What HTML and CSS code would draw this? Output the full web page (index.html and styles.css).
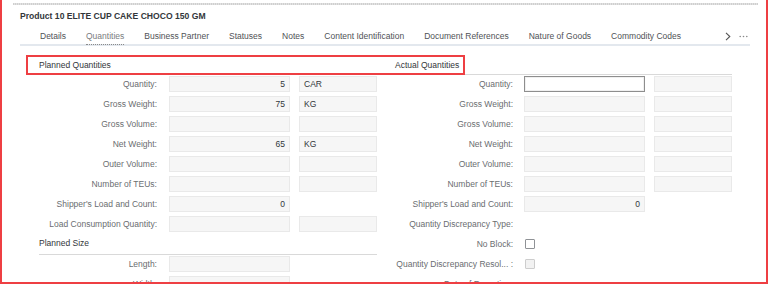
FILE: index.html
```html
<!DOCTYPE html>
<html>
<head>
<meta charset="utf-8">
<link rel="stylesheet" href="styles.css">
</head>
<body>
<div class="frame">
  <div class="topline"></div>
  <div class="title">Product 10 ELITE CUP CAKE CHOCO 150 GM</div>
  <div class="tabs">
    <span class="tab">Details</span>
    <span class="tab selected">Quantities</span>
    <span class="tab">Business Partner</span>
    <span class="tab">Statuses</span>
    <span class="tab">Notes</span>
    <span class="tab">Content Identification</span>
    <span class="tab">Document References</span>
    <span class="tab">Nature of Goods</span>
    <span class="tab">Commodity Codes</span>
    <span class="tab-more">
      <svg class="chev" width="6" height="9" viewBox="0 0 6 9"><path d="M1 0.8 L4.8 4.5 L1 8.2" fill="none" stroke="#555" stroke-width="1.1"/></svg>
      <svg class="dots" width="9" height="3" viewBox="0 0 9 3"><circle cx="1.2" cy="1.5" r="0.8" fill="#888"/><circle cx="4.5" cy="1.5" r="0.8" fill="#888"/><circle cx="7.8" cy="1.5" r="0.8" fill="#888"/></svg>
    </span>
  </div>

  <div class="form">
    <div class="col col-left">
      <div class="heading">Planned Quantities</div>
      <div class="grid">
        <div class="label">Quantity:</div><div class="field num">5</div><div class="field">CAR</div>
        <div class="label">Gross Weight:</div><div class="field num">75</div><div class="field">KG</div>
        <div class="label">Gross Volume:</div><div class="field num"></div><div class="field"></div>
        <div class="label">Net Weight:</div><div class="field num">65</div><div class="field">KG</div>
        <div class="label">Outer Volume:</div><div class="field num"></div><div class="field"></div>
        <div class="label">Number of TEUs:</div><div class="field num"></div><div class="field"></div>
        <div class="label">Shipper's Load and Count:</div><div class="field num">0</div><div class="empty"></div>
        <div class="label">Load Consumption Quantity:</div><div class="field num"></div><div class="field"></div>
      </div>
      <div class="heading heading-sub">Planned Size</div>
      <div class="grid">
        <div class="label">Length:</div><div class="field num"></div><div class="empty"></div>
        <div class="label">Width:</div><div class="field num"></div><div class="empty"></div>
      </div>
    </div>
    <div class="col col-right">
      <div class="heading">Actual Quantities</div>
      <div class="grid">
        <div class="label">Quantity:</div><div class="field num active"></div><div class="field"></div>
        <div class="label">Gross Weight:</div><div class="field num"></div><div class="field"></div>
        <div class="label">Gross Volume:</div><div class="field num"></div><div class="field"></div>
        <div class="label">Net Weight:</div><div class="field num"></div><div class="field"></div>
        <div class="label">Outer Volume:</div><div class="field num"></div><div class="field"></div>
        <div class="label">Number of TEUs:</div><div class="field num"></div><div class="field"></div>
        <div class="label">Shipper's Load and Count:</div><div class="field num">0</div><div class="empty"></div>
        <div class="label">Quantity Discrepancy Type:</div><div class="empty"></div><div class="empty"></div>
        <div class="label">No Block:</div><div class="cbcell"><span class="checkbox"></span></div><div class="empty"></div>
        <div class="label">Quantity Discrepancy Resol... :</div><div class="cbcell"><span class="checkbox disabled"></span></div><div class="empty"></div>
        <div class="label">Date of Reporting:</div><div class="empty"></div><div class="empty"></div>
      </div>
    </div>
  </div>

  <div class="annot"></div>
</div>
</body>
</html>
```

FILE: styles.css
```css
* {
  box-sizing: border-box;
}

body {
  margin: 0;
  background: #ffffff;
  font-family: "Liberation Sans", Arial, sans-serif;
  font-size: 8.5px;
  color: #32363a;
}

.frame {
  position: relative;
  width: 768px;
  height: 284px;
  border-left: 2px solid #ee3f43;
  border-right: 2px solid #ee3f43;
  border-bottom: 2px solid #ee3f43;
  overflow: hidden;
  background: #ffffff;
}

.topline {
  margin: 3px 8px 0 11px;
  height: 2px;
  background: repeating-linear-gradient(90deg, #cfcfcf 0 1px, #e2e2e2 1px 2px);
}

.title {
  margin-top: 5px;
  padding-left: 18px;
  font-weight: bold;
  font-size: 8.6px;
  line-height: 12px;
  color: #32363a;
}

.tabs {
  display: flex;
  align-items: center;
  gap: 20px;
  margin: 8px 16px 0 18px;
  padding: 0 2px 2px 20px;
  border-bottom: 2px solid #e3e8ee;
  height: 16px;
}

.tab {
  line-height: 12px;
  color: #4f5256;
  white-space: nowrap;
}

.tab.selected {
  color: #7a7d80;
  border-bottom: 1px dotted #8a8a8a;
  line-height: 11px;
  margin-bottom: -3px;
  padding-bottom: 2px;
}

.tab-more {
  margin-left: auto;
  display: flex;
  align-items: center;
  gap: 8px;
}

.form {
  display: flex;
  gap: 18px;
  margin-top: 10px;
  padding-left: 37px;
}

.col-left {
  width: 338px;
}

.col-right {
  width: 337px;
}

.heading {
  line-height: 12px;
  padding: 3px 0 3px 0;
  border-bottom: 1px solid #d9d9d9;
  color: #32363a;
}

.heading-sub {
  margin-top: 4px;
  line-height: 14px;
  padding: 0 0 4px 0;
}

.grid {
  display: grid;
  grid-auto-rows: 16px;
  row-gap: 4px;
  column-gap: 9px;
  margin-top: 1px;
}

.col-left .grid {
  grid-template-columns: 121px 121px 78px;
}

.col-right .grid {
  grid-template-columns: 120px 121px 78px;
}

.label {
  text-align: right;
  white-space: nowrap;
  color: #6a6d70;
  line-height: 16px;
  padding-right: 3px;
}

.col-right .label {
  padding-right: 2px;
}

.field {
  background: #f6f6f6;
  border: 1px solid #e9e9e9;
  line-height: 14px;
  padding: 0 4px;
  color: #32363a;
  white-space: nowrap;
}

.field.num {
  text-align: right;
}

.field.active {
  background: #ffffff;
  border: 1px solid #8e8e8e;
  box-shadow: inset 0 0 0 1px #f0f0f0;
}

.cbcell {
  display: flex;
  align-items: center;
}

.checkbox {
  display: block;
  width: 10px;
  height: 10px;
  border: 1px solid #8f9296;
  border-radius: 1px;
  background: #ffffff;
  margin-left: 1px;
}

.checkbox.disabled {
  border-color: #cdcdcd;
  background: #f2f2f2;
}

.annot {
  position: absolute;
  left: 24px;
  top: 55px;
  width: 439px;
  height: 20px;
  border: 2px solid #ee3f43;
}
```
